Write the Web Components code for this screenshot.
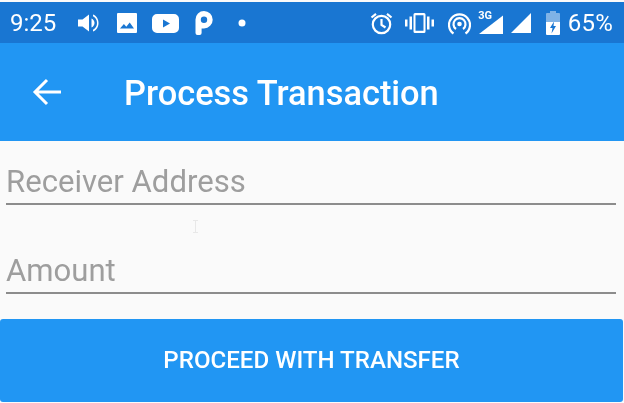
<!DOCTYPE html>
<html><head><meta charset="utf-8"><style>
html,body{margin:0;padding:0;background:#fafafa;overflow:hidden}
body{width:624px;height:403px;font-family:Roboto,sans-serif}
tx-field:nth-of-type(1){margin-top:23px}
tx-field:nth-of-type(2){margin-top:48px}
</style></head><body>
<tx-screen>
<tx-status></tx-status>
<tx-appbar>Process Transaction</tx-appbar>
<tx-field>Receiver Address</tx-field>
<tx-field>Amount</tx-field>
<tx-button>PROCEED WITH TRANSFER</tx-button>
</tx-screen>
<script>
class Base extends HTMLElement{
  constructor(){super();this.attachShadow({mode:'open'}).innerHTML=this.constructor.html;}
}
class TxScreen extends Base{static html=`<style>:host{display:flex;flex-direction:column;position:relative;width:624px;height:403px;background:#fafafa;padding-top:2px;box-sizing:border-box;filter:blur(.35px)}
.c{position:absolute;left:192px;top:220px}</style><slot></slot><svg class="c" width="7" height="13" viewBox="0 0 7 13" fill="none" stroke="#e8e8e8"><path d="M1 .5h5M3.500.5v12M1 12.500h5"/></svg>`}
class TxStatus extends Base{static html=`<style>
:host{display:flex;align-items:center;height:41px;background:#1976d2;color:#fff;font:400 24px/1 Roboto,sans-serif;box-sizing:border-box;padding:1px 11px 0 10px}
svg{display:block;flex:none;fill:#fff}
.t{width:47px;letter-spacing:0}
.sp{flex:1}
.g{position:absolute;left:-.5px;top:-1px;font:700 11px/11px Roboto,sans-serif;color:#fff;letter-spacing:-.2px;background:#1976d2;padding-right:1px}
</style>
<span class="t">9:25</span>
<svg style="margin-left:21px" width="21" height="20" viewBox="0 0 21 20"><path d="M0 6.500h4.500L11 1.500v17l-6.500-5H0z"/><path d="M13.500 5.500c2 1 3 2.700 3 4.500s-1 3.500-3 4.500z"/><path d="M15 1.500c3.500 1.300 5.500 4.600 5.500 8.500s-2 7.200-5.500 8.500v-1.800c2.600-1.300 4-3.700 4-6.700s-1.400-5.400-4-6.700z"/></svg>
<svg style="margin-left:18px" width="20" height="20" viewBox="0 0 20 20"><path fill-rule="evenodd" d="M1 0h18a1 1 0 0 1 1 1v18a1 1 0 0 1-1 1H1a1 1 0 0 1-1-1V1a1 1 0 0 1 1-1zM3 15.500h14l-4.300-6-3.400 4.300-2.400-2.800z"/></svg>
<svg style="margin-left:15px" width="27" height="19" viewBox="0 0 27 19"><path fill-rule="evenodd" d="M5 0h17a5 5 0 0 1 5 5v9a5 5 0 0 1-5 5H5a5 5 0 0 1-5-5V5a5 5 0 0 1 5-5zM11 5.500v8l7-4z"/></svg>
<svg style="margin-left:16px" width="18" height="24" viewBox="0 0 18 24"><path fill-rule="evenodd" d="M9 0a8.700 8.700 0 0 1 0 17.400H6.600V22a2 2 0 0 1-2 2H2.500A2 2 0 0 1 .5 22V8.500A8.500 8.500 0 0 1 9 0zM9 5.500a3.200 3.200 0 1 0 0 6.400a3.200 3.200 0 0 0 0-6.400z"/></svg>
<svg style="margin-left:25px" width="8" height="8" viewBox="0 0 8 8"><circle cx="4" cy="4" r="3.500"/></svg>
<span class="sp"></span>
<svg width="23" height="23" viewBox="0 0 23 23" style="fill:none;stroke:#fff;stroke-width:2.200"><circle cx="11.500" cy="12.500" r="8.700"/><path d="M11.500 7v6l4 2.500M1.500 5.500L6 1.800M21.500 5.500L17 1.800"/></svg>
<svg style="margin-left:12px" width="29" height="20" viewBox="0 0 29 20"><path fill-rule="evenodd" d="M10 0h9a1.500 1.500 0 0 1 1.500 1.500v17A1.500 1.500 0 0 1 19 20h-9a1.500 1.500 0 0 1-1.500-1.500v-17A1.500 1.500 0 0 1 10 0zM10.500 2.300v15.400h8V2.300z"/><path d="M4.500 3.500h2.500v13H4.500zM0 6.500h2.500v7H0zM22 3.500h2.500v13H22zM26.500 6.500H29v7h-2.500z"/></svg>
<svg style="margin-left:14px" width="23" height="23" viewBox="0 0 23 23"><g fill="none" stroke="#fff" stroke-width="2.200"><path d="M5.500 21.500a10.500 10.500 0 1 1 12 0"/><path d="M8 17a6 6 0 1 1 7 0"/></g><circle cx="11.500" cy="12" r="2.300"/></svg>
<span style="margin-left:8px;position:relative;width:24px;height:24px;flex:none">
<svg width="24" height="24" viewBox="0 0 24 24" style="position:absolute;left:0;top:0"><path d="M24 4.500V23H0z"/></svg>
<b class="g">3G</b>
</span>
<svg style="margin-left:8px" width="20" height="20" viewBox="0 0 20 20"><path d="M20 0v20H0z"/></svg>
<svg style="margin-left:15px" width="14" height="24" viewBox="0 0 14 24"><path d="M4 0h6v2h3a1 1 0 0 1 1 1v8H0V3a1 1 0 0 1 1-1h3z" fill="#fff" fill-opacity=".45"/><path fill-rule="evenodd" d="M0 11h14v12a1 1 0 0 1-1 1H1a1 1 0 0 1-1-1zM8 10.500L4 17h2.500l-1 5.500L10 15H7.500z"/></svg>
<span style="margin-left:8px;letter-spacing:.2px">65%</span>`}
class TxAppbar extends Base{static html=`<style>
:host{display:flex;align-items:center;height:98px;background:#2196f3;color:#fff;font:500 34.400px/1 Roboto,sans-serif;padding:2px 0 0 32px;box-sizing:border-box}
svg{flex:none;display:block;margin-right:62px;margin-top:-2px}
</style><svg width="30" height="28" viewBox="0 0 30 28" fill="none" stroke="#fff" stroke-width="3"><path d="M29 14H3M15 2L3 14l12 12"/></svg><slot></slot>`}
class TxField extends Base{static html=`<style>
:host{display:block;margin:0 8px 0 6px;height:39px;border-bottom:2px solid #8c8c8c;font:400 31.100px/35px Roboto,sans-serif;color:#9e9e9e}
</style><slot></slot>`}
class TxButton extends Base{static html=`<style>
:host{display:flex;align-items:center;justify-content:center;height:83px;width:623px;margin-top:25px;background:#2196f3;border-radius:3px;color:#fff;font:500 24.100px/1 Roboto,sans-serif}
</style><slot></slot>`}
customElements.define('tx-screen',TxScreen);
customElements.define('tx-status',TxStatus);
customElements.define('tx-appbar',TxAppbar);
customElements.define('tx-field',TxField);
customElements.define('tx-button',TxButton);
</script>
</body></html>
